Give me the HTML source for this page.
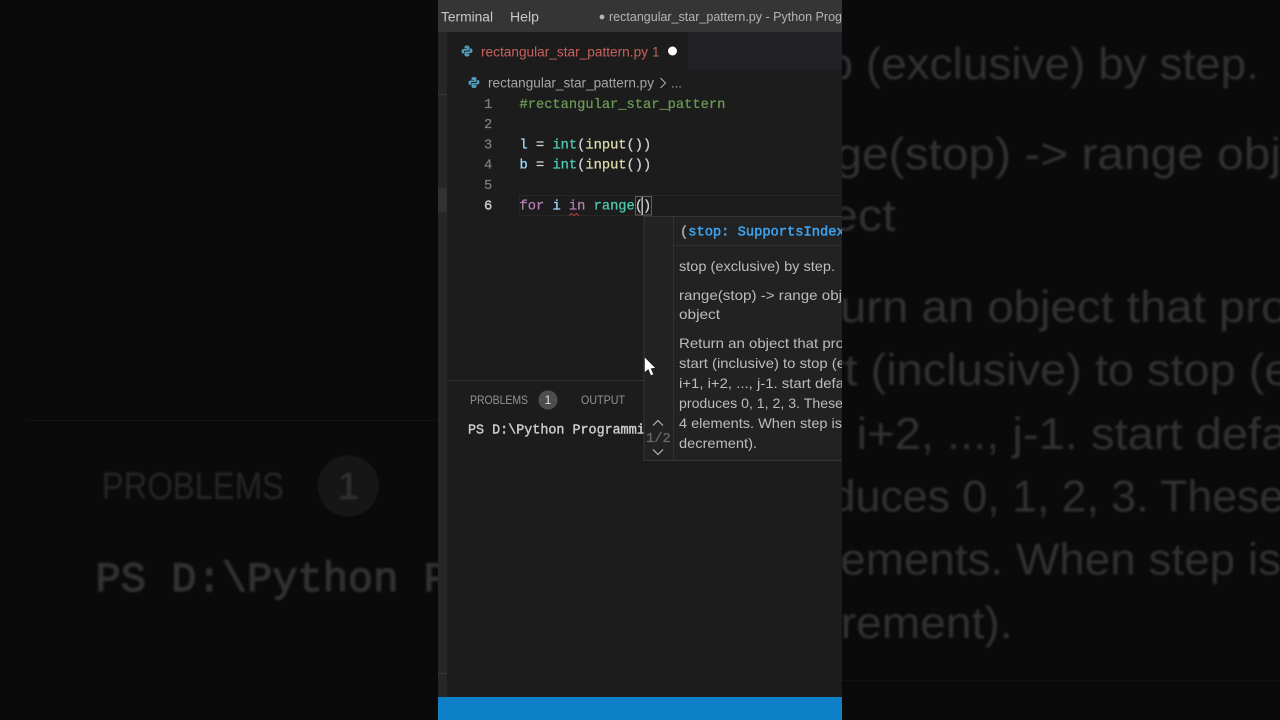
<!DOCTYPE html>
<html lang="en">
<head>
<meta charset="utf-8">
<title>rectangular_star_pattern.py</title>
<style>
html,body{margin:0;padding:0;background:#0a0a0a;width:1280px;height:720px;overflow:hidden}
svg{display:block}
.ui{font-family:"Liberation Sans",sans-serif}
.mono{font-family:"Liberation Mono",monospace;font-size:13.73px;white-space:pre;stroke-width:.25px}
.term{font-family:"Liberation Mono",monospace;font-size:13.4px;white-space:pre;stroke-width:.4px}
.cm{fill:#6a9955;stroke:#6a9955}
.vr{fill:#9cdcfe;stroke:#9cdcfe}
.ty{fill:#4ec9b0;stroke:#4ec9b0}
.fn{fill:#dcdcaa;stroke:#dcdcaa}
.kw{fill:#b77fb2;stroke:#b77fb2}
.pl{fill:#d4d4d4;stroke:#d4d4d4}
.ln{fill:#7d7d7d;stroke:#7d7d7d}
.hd{fill:#3ea2ee;stroke:#3ea2ee;stroke-width:.5px}
</style>
</head>
<body>
<svg width="1280" height="720" viewBox="0 0 1280 720" xmlns="http://www.w3.org/2000/svg">
<defs>
<filter id="bb" x="-5%" y="-5%" width="110%" height="110%"><feGaussianBlur stdDeviation="0.3"/></filter>
<filter id="fb" x="-5%" y="-5%" width="110%" height="110%"><feGaussianBlur stdDeviation="0.35"/></filter>
<clipPath id="cl"><rect x="0" y="0" width="438" height="720"/></clipPath>
<clipPath id="cr"><rect x="842" y="0" width="438" height="720"/></clipPath>
<clipPath id="cm"><rect x="438" y="0" width="404" height="720"/></clipPath>
<clipPath id="ct"><rect x="438" y="0" width="206" height="720"/></clipPath>
<clipPath id="ch"><rect x="674" y="218" width="168" height="26"/></clipPath>
</defs>

<rect width="1280" height="720" fill="#0a0a0a"/>

<!-- left blurred background -->
<g clip-path="url(#cl)">
<rect x="27" y="420" width="411" height="1" fill="#131313"/>
<g filter="url(#bb)" transform="translate(-1374,-770) scale(3.14)">
<text class="ui" x="470" y="404.2" font-size="12" textLength="58" lengthAdjust="spacingAndGlyphs" fill="#282828">PROBLEMS</text>
<circle cx="548.5" cy="400" r="9.8" fill="#171717"/>
<text class="ui" x="545.2" y="404.2" font-size="12" fill="#333333">1</text>
<text class="term" x="468" y="433.5" fill="#303030" stroke="#303030">PS D:\Python P</text>
</g>
</g>

<!-- right blurred background -->
<g clip-path="url(#cr)">
<rect x="842" y="680" width="438" height="1" fill="#111111"/>
<g filter="url(#bb)" transform="translate(-1378,-777) scale(3.158)" class="ui" font-size="14" fill="#303030">
<text x="679" y="271" textLength="156" lengthAdjust="spacingAndGlyphs">stop (exclusive) by step.</text>
<text x="679" y="299.6" textLength="163" lengthAdjust="spacingAndGlyphs">range(stop) -&gt; range obj</text>
<text x="679" y="319" textLength="41" lengthAdjust="spacingAndGlyphs">object</text>
<text x="679" y="348" textLength="165" lengthAdjust="spacingAndGlyphs">Return an object that pro</text>
<text x="679" y="368" textLength="166" lengthAdjust="spacingAndGlyphs">start (inclusive) to stop (e</text>
<text x="679" y="388.2" textLength="165" lengthAdjust="spacingAndGlyphs">i+1, i+2, ..., j-1. start defa</text>
<text x="679" y="408" textLength="164" lengthAdjust="spacingAndGlyphs">produces 0, 1, 2, 3. These</text>
<text x="679" y="428" textLength="163" lengthAdjust="spacingAndGlyphs">4 elements. When step is</text>
<text x="679" y="448" textLength="78" lengthAdjust="spacingAndGlyphs">decrement).</text>
</g>
</g>

<!-- main VS Code window -->
<g clip-path="url(#cm)">
<g filter="url(#fb)">
<rect x="438" y="0" width="404" height="720" fill="#1d1d1d"/>
<!-- title bar -->
<rect x="438" y="0" width="404" height="32" fill="#363636"/>
<text class="ui" x="441" y="21.5" font-size="13.5" textLength="52" lengthAdjust="spacingAndGlyphs" fill="#c8c8c8">Terminal</text>
<text class="ui" x="510" y="21.5" font-size="13.5" textLength="29" lengthAdjust="spacingAndGlyphs" fill="#c8c8c8">Help</text>
<circle cx="602" cy="17" r="2.4" fill="#b4b4b4"/>
<text class="ui" x="609" y="21" font-size="13" textLength="233" lengthAdjust="spacingAndGlyphs" fill="#b4b4b4">rectangular_star_pattern.py - Python Prog</text>

<!-- activity strip -->
<rect x="438" y="32" width="9" height="665" fill="#282828"/>
<rect x="438" y="94" width="9" height="1" fill="#383838"/>
<rect x="438" y="188" width="9" height="24" fill="#333333"/>
<rect x="438" y="673" width="9" height="1" fill="#383838"/>

<!-- tab bar -->
<rect x="447" y="32" width="395" height="38" fill="#242425"/>
<rect x="447" y="32" width="241" height="38" fill="#1d1d1d"/>
<g transform="translate(461,45)" fill="#519aba">
<path d="M6 .5C4 .5 3.5 1.3 3.5 2.3V3.5H6.3V4H2.2C1 4 .5 5 .5 6.2C.5 7.6 1 8.5 2.2 8.5H3V7C3 6 3.8 5.5 4.6 5.5H7.3C8 5.5 8.5 5 8.5 4.3V2.3C8.5 1.2 7.8 .5 6 .5Z"/>
<path d="M6 .5C4 .5 3.5 1.3 3.5 2.3V3.5H6.3V4H2.2C1 4 .5 5 .5 6.2C.5 7.6 1 8.5 2.2 8.5H3V7C3 6 3.8 5.5 4.6 5.5H7.3C8 5.5 8.5 5 8.5 4.3V2.3C8.5 1.2 7.8 .5 6 .5Z" transform="rotate(180 6 6)"/>
</g>
<text class="ui" x="481" y="56.5" font-size="13.5" textLength="167" lengthAdjust="spacingAndGlyphs" fill="#c9615c">rectangular_star_pattern.py</text>
<text class="ui" x="652" y="56.5" font-size="13.5" fill="#b9625e">1</text>
<circle cx="672.5" cy="51" r="4.5" fill="#ffffff"/>

<!-- breadcrumb -->
<g transform="translate(468,76.5)" fill="#519aba">
<path d="M6 .5C4 .5 3.5 1.3 3.5 2.3V3.5H6.3V4H2.2C1 4 .5 5 .5 6.2C.5 7.6 1 8.5 2.2 8.5H3V7C3 6 3.8 5.5 4.6 5.5H7.3C8 5.5 8.5 5 8.5 4.3V2.3C8.5 1.2 7.8 .5 6 .5Z"/>
<path d="M6 .5C4 .5 3.5 1.3 3.5 2.3V3.5H6.3V4H2.2C1 4 .5 5 .5 6.2C.5 7.6 1 8.5 2.2 8.5H3V7C3 6 3.8 5.5 4.6 5.5H7.3C8 5.5 8.5 5 8.5 4.3V2.3C8.5 1.2 7.8 .5 6 .5Z" transform="rotate(180 6 6)"/>
</g>
<text class="ui" x="488" y="87.5" font-size="13.5" textLength="166" lengthAdjust="spacingAndGlyphs" fill="#a6a6a6">rectangular_star_pattern.py</text>
<path d="M660.5 78L665.5 83L660.5 88" fill="none" stroke="#a6a6a6" stroke-width="1.1"/>
<text class="ui" x="671" y="87.5" font-size="13" fill="#a6a6a6">...</text>

<!-- current line highlight -->
<path d="M842 195.5H519.5V215.5H644" fill="none" stroke="#282828"/>

<!-- line numbers -->
<text class="mono ln" x="484" y="108">1</text>
<text class="mono ln" x="484" y="128">2</text>
<text class="mono ln" x="484" y="148.4">3</text>
<text class="mono ln" x="484" y="168.6">4</text>
<text class="mono ln" x="484" y="189">5</text>
<text class="mono" x="484" y="209.4" fill="#c6c6c6" stroke="#c6c6c6" style="stroke-width:.5px">6</text>

<!-- code -->
<text class="mono cm" x="519.5" y="108">#rectangular_star_pattern</text>
<text class="mono pl" x="519.5" y="148.4"><tspan class="vr">l</tspan> = <tspan class="ty">int</tspan>(<tspan class="fn">input</tspan>())</text>
<text class="mono pl" x="519.5" y="168.6"><tspan class="vr">b</tspan> = <tspan class="ty">int</tspan>(<tspan class="fn">input</tspan>())</text>
<text class="mono pl" x="519.5" y="209.4"><tspan class="kw">for</tspan> <tspan class="vr">i</tspan> <tspan class="kw">in</tspan> <tspan class="ty">range</tspan>()</text>
<path d="M569 215.5L571.5 213.5L574 215.5L576.5 213.5L579 215.5" fill="none" stroke="#b8403c" stroke-width="1"/>
<rect x="635.5" y="196.5" width="16" height="18.5" fill="none" stroke="#5e5e5e"/>
<rect x="641.5" y="197" width="1.4" height="18" fill="#c8c8c8"/>

<!-- panel -->
<rect x="447" y="380" width="395" height="1" fill="#333333"/>
<text class="ui" x="470" y="404.2" font-size="12" textLength="58" lengthAdjust="spacingAndGlyphs" fill="#949494">PROBLEMS</text>
<circle cx="548" cy="400" r="9.6" fill="#4d4d4d"/>
<text class="ui" x="544.6" y="404.2" font-size="12" fill="#e0e0e0">1</text>
<text class="ui" x="581" y="404.2" font-size="12" textLength="44" lengthAdjust="spacingAndGlyphs" fill="#949494">OUTPUT</text>
<g clip-path="url(#ct)">
<text class="term" x="468" y="433.3" fill="#cccccc" stroke="#cccccc">PS D:\Python Programming</text>
</g>

<!-- parameter hints tooltip -->
<rect x="644" y="216.5" width="200" height="244" fill="#232324" stroke="#363636"/>
<rect x="673" y="217" width="1" height="243" fill="#323232"/>
<rect x="674" y="245" width="168" height="1" fill="#323232"/>
<g clip-path="url(#ch)">
<text class="mono hd" x="680" y="235.3"><tspan fill="#a8a8a8" stroke="#a8a8a8">(</tspan>stop: SupportsIndex</text>
</g>
<g class="ui" font-size="14" fill="#bcbcbc">
<text x="679" y="271" textLength="156" lengthAdjust="spacingAndGlyphs">stop (exclusive) by step.</text>
<text x="679" y="300" textLength="163" lengthAdjust="spacingAndGlyphs">range(stop) -&gt; range obj</text>
<text x="679" y="319" textLength="41" lengthAdjust="spacingAndGlyphs">object</text>
<text x="679" y="348" textLength="165" lengthAdjust="spacingAndGlyphs">Return an object that pro</text>
<text x="679" y="368" textLength="166" lengthAdjust="spacingAndGlyphs">start (inclusive) to stop (e</text>
<text x="679" y="388" textLength="165" lengthAdjust="spacingAndGlyphs">i+1, i+2, ..., j-1. start defa</text>
<text x="679" y="408" textLength="164" lengthAdjust="spacingAndGlyphs">produces 0, 1, 2, 3. These</text>
<text x="679" y="428" textLength="163" lengthAdjust="spacingAndGlyphs">4 elements. When step is</text>
<text x="679" y="448" textLength="78" lengthAdjust="spacingAndGlyphs">decrement).</text>
</g>
<path d="M653 425.5L658 420.5L663 425.5" fill="none" stroke="#bdbdbd" stroke-width="1.1"/>
<text class="mono" x="646" y="442" fill="#6a6a6a" stroke="#6a6a6a">1/2</text>
<path d="M653 449.5L658 454.5L663 449.5" fill="none" stroke="#bdbdbd" stroke-width="1.1"/>

<!-- status bar -->
<rect x="438" y="697" width="404" height="23" fill="#0a80c8"/>
</g>

<!-- mouse cursor -->
<path d="M644.5 357L644.5 372.5L648.3 369.4L650.8 375.6L653.6 374.4L651 368.6L655.6 368.2Z" fill="#ffffff" stroke="#111" stroke-width=".5"/>
</g>
</svg>
</body>
</html>
